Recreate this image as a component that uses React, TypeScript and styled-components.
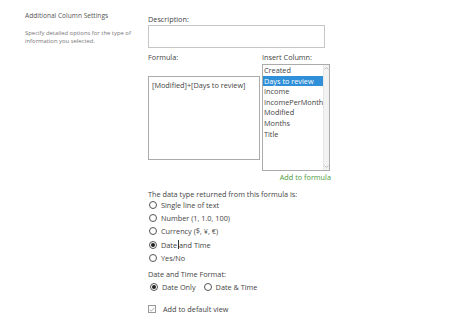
import React from "react";
import styled, { createGlobalStyle } from "styled-components";

const Global = createGlobalStyle`
  html, body { margin: 0; padding: 0; background: #fff; }
  body { font-family: "Open Sans", "Noto Sans", sans-serif; color: #444; }
`;

const FS = 7.3;

const Page = styled.div`
  display: flex;
  width: 474px;
  height: 322px;
  overflow: hidden;
  background: #fff;
`;

const LeftCol = styled.div`
  width: 147px;
  padding: 11px 0 0 25px;
  box-sizing: border-box;
  flex: none;
`;

const SectionTitle = styled.div`
  font-size: 6.6px;
  line-height: 10px;
  color: #555;
  margin-bottom: 8px;
  white-space: nowrap;
`;

const SectionHelp = styled.div`
  font-size: 5.9px;
  line-height: 8px;
  color: #777;
  white-space: nowrap;
`;

const RightCol = styled.div`
  flex: none;
  padding: 14px 0 0 1px;
  display: flex;
  flex-direction: column;
`;

const Label = styled.div<{ $mt?: number }>`
  font-size: ${FS}px;
  line-height: 11px;
  color: #444;
  margin-top: ${(p) => p.$mt ?? 0}px;
  white-space: nowrap;
`;

const DescBox = styled.div`
  width: 177px;
  height: 23px;
  border: 1px solid #c6c6c6;
  box-sizing: border-box;
`;

const FormulaRow = styled.div`
  display: flex;
  gap: 2px;
  margin-top: 4px;
`;

const FormulaCol = styled.div`
  display: flex;
  flex-direction: column;
  width: 112px;
`;

const InsertCol = styled.div`
  display: flex;
  flex-direction: column;
  align-items: stretch;
`;

const FormulaBox = styled.div`
  margin-top: 13px;
  width: 112px;
  height: 84px;
  border: 1px solid #ababab;
  box-sizing: border-box;
  padding: 3px 3px;
  font-size: ${FS}px;
  line-height: 11px;
  color: #444;
  white-space: nowrap;
`;

const ListBox = styled.div`
  margin-top: 1px;
  width: 68px;
  height: 107px;
  border: 1px solid #ababab;
  box-sizing: border-box;
  display: flex;
`;

const Items = styled.div`
  flex: 1;
`;

const Item = styled.div<{ $sel?: boolean }>`
  font-size: ${FS}px;
  line-height: 10.6px;
  height: 10.6px;
  padding-left: 1px;
  white-space: nowrap;
  color: ${(p) => (p.$sel ? "#fff" : "#444")};
  background: ${(p) => (p.$sel ? "#2f8fd8" : "transparent")};
`;

const ScrollBar = styled.div`
  width: 7px;
  background: #f2f2f2;
  border-left: 1px solid #e6e6e6;
  display: flex;
  flex-direction: column;
  justify-content: space-between;
  align-items: center;
  padding: 2px 0;
  box-sizing: border-box;
`;

const AddLink = styled.div`
  font-size: ${FS}px;
  line-height: 11px;
  color: #4d9b40;
  text-align: right;
  margin-top: 1px;
  margin-right: -1px;
`;

const RadioGroup = styled.div`
  display: flex;
  flex-direction: column;
  margin-top: -2px;
`;

const RadioRow = styled.div`
  display: flex;
  align-items: center;
  height: 13.3px;
  padding-left: 1px;
  font-size: ${FS}px;
  color: #444;
`;

const RadioCircle = styled.span<{ $on?: boolean }>`
  width: 8px;
  height: 8px;
  border: 1px solid #555;
  border-radius: 50%;
  box-sizing: border-box;
  display: inline-flex;
  align-items: center;
  justify-content: center;
  margin-right: 4px;
  flex: none;
  &::after {
    content: "";
    width: 4px;
    height: 4px;
    border-radius: 50%;
    background: ${(p) => (p.$on ? "#222" : "transparent")};
  }
`;

const InlineGroup = styled.div`
  display: flex;
  align-items: center;
  gap: 8px;
  height: 13px;
  padding-left: 2px;
`;

const InlineOption = styled.span`
  display: flex;
  align-items: center;
  font-size: ${FS}px;
  color: #444;
`;

const Caret = styled.span`
  display: inline-block;
  width: 1px;
  height: 9px;
  background: #333;
  vertical-align: -1px;
  margin: 0 0.5px;
`;

const CheckRow = styled.div`
  display: flex;
  align-items: center;
  margin-top: 11px;
  font-size: ${FS}px;
  color: #444;
`;

const CheckBox = styled.span`
  width: 8px;
  height: 8px;
  border: 1px solid #999;
  box-sizing: border-box;
  margin-right: 7px;
  display: inline-flex;
  align-items: center;
  justify-content: center;
`;

const Arrow = ({ up }: { up?: boolean }) => (
  <svg width="5" height="3" viewBox="0 0 5 3">
    <path d={up ? "M0.5 2.5 L2.5 0.5 L4.5 2.5" : "M0.5 0.5 L2.5 2.5 L4.5 0.5"} fill="none" stroke="#b0b0b0" strokeWidth="0.8" />
  </svg>
);

const columns = ["Created", "Days to review", "Income", "IncomePerMonth", "Modified", "Months", "Title"];
const types = ["Single line of text", "Number (1, 1.0, 100)", "Currency ($, ¥, €)", "Date and Time", "Yes/No"];

export default function App() {
  return (
    <Page>
      <Global />
      <LeftCol>
        <SectionTitle>Additional Column Settings</SectionTitle>
        <SectionHelp>
          Specify detailed options for the type of
          <br />
          information you selected.
        </SectionHelp>
      </LeftCol>
      <RightCol>
        <Label>Description:</Label>
        <DescBox />
        <FormulaRow>
          <FormulaCol>
            <Label>Formula:</Label>
            <FormulaBox>[Modified]+[Days to review]</FormulaBox>
          </FormulaCol>
          <InsertCol>
            <Label>Insert Column:</Label>
            <ListBox>
              <Items>
                {columns.map((c) => (
                  <Item key={c} $sel={c === "Days to review"}>
                    {c}
                  </Item>
                ))}
              </Items>
              <ScrollBar>
                <Arrow up />
                <Arrow />
              </ScrollBar>
            </ListBox>
            <AddLink>Add to formula</AddLink>
          </InsertCol>
        </FormulaRow>
        <Label $mt={6}>The data type returned from this formula is:</Label>
        <RadioGroup>
          {types.map((t) => (
            <RadioRow key={t}>
              <RadioCircle $on={t === "Date and Time"} />
              {t === "Date and Time" ? (
                <span>
                  Date<Caret />and Time
                </span>
              ) : (
                t
              )}
            </RadioRow>
          ))}
        </RadioGroup>
        <Label $mt={5}>Date and Time Format:</Label>
        <InlineGroup>
          <InlineOption>
            <RadioCircle $on />
            Date Only
          </InlineOption>
          <InlineOption>
            <RadioCircle />
            Date &amp; Time
          </InlineOption>
        </InlineGroup>
        <CheckRow>
          <CheckBox>
            <svg width="6" height="5" viewBox="0 0 6 5">
              <path d="M0.6 2.6 L2.3 4.1 L5.4 0.8" fill="none" stroke="#999" strokeWidth="0.8" />
            </svg>
          </CheckBox>
          Add to default view
        </CheckRow>
      </RightCol>
    </Page>
  );
}
